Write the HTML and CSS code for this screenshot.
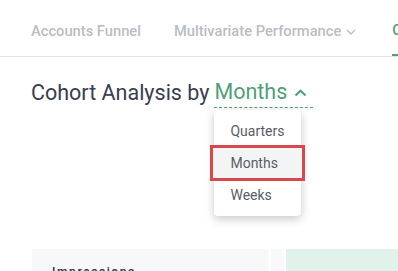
FILE: index.html
```html
<!DOCTYPE html>
<html>
<head>
<meta charset="utf-8">
<link rel="stylesheet" href="styles.css">
</head>
<body>
<nav class="tabs">
  <div class="tab">Accounts Funnel</div>
  <div class="tab">Multivariate Performance <svg class="chev" width="10" height="6" viewBox="0 0 10 6"><path d="M1 1l4 4 4-4" fill="none" stroke="#b9bdc5" stroke-width="1.4"/></svg></div>
  <div class="tab active">C</div>
</nav>
<section class="head">
  <h1 class="title">Cohort Analysis by <span class="picker">Months <svg class="up" width="13" height="8" viewBox="0 0 13 8"><path d="M1.5 6.5l5-4.8 5 4.8" fill="none" stroke="#4f9f79" stroke-width="2"/></svg>
    <ul class="menu">
      <li>Quarters</li>
      <li class="sel">Months</li>
      <li>Weeks</li>
    </ul>
  </span></h1>
</section>
<section class="cards">
  <div class="card gray"><span class="label">Impressions</span></div>
  <div class="sep"></div>
  <div class="card green"></div>
</section>
</body>
</html>
```
FILE: styles.css
```css
html, body { margin: 0; padding: 0; background: #fff; }
body { font-family: Roboto, "Noto Sans", sans-serif; width: 398px; height: 271px; overflow: hidden; }
.tabs { display: flex; height: 56px; border-bottom: 1px solid #e2e3e6; padding-left: 31px; gap: 33px; white-space: nowrap; overflow: hidden; }
.tab { font-size: 14.7px; font-weight: 500; color: #b9bdc5; display: flex; align-items: center; height: 56px; padding-top: 6px; box-sizing: border-box; }
.chev { margin-left: 5px; margin-top: 2px; }
.tab.active { color: #4f9f79; border-bottom: 2px solid #4f9f79; margin-left: 3px; width: 8px; overflow: hidden; }
.head { padding: 20px 0 0 31px; height: 100px; }
.title { margin: 0; font-size: 21.5px; font-weight: 400; color: #383d51; line-height: 32px; display: flex; white-space: nowrap; }
.picker { position: relative; color: #4f9f79; margin-left: 5px; border-bottom: 1px dashed #4f9f79; height: 30px; display: flex; align-items: center; }
.up { margin-left: 7px; margin-right: 6px; margin-top: 2px; }
.menu { position: absolute; left: 0; top: 33px; width: 87px; margin: 0; padding: 5px 0; list-style: none; background: #fff; border-radius: 4px; box-shadow: 0 3px 10px rgba(0,0,0,0.22); }
.menu li { font-size: 14px; color: #595d64; line-height: 32px; padding-left: 16px; height: 32px; }
.menu li.sel { background: #f3f5f5; outline: 3px solid #d9484a; outline-offset: -1px; margin: 0 -2px; padding-left: 18px; }
.cards { display: flex; padding-left: 32px; margin-top: 72px; height: 40px; }
.card.gray { width: 236px; background: #f7f8fa; padding: 12px 0 0 20px; box-sizing: border-box; }
.label { font-size: 12px; font-weight: 500; color: #2f3240; letter-spacing: 1.6px; }
.sep { width: 13px; margin-left: 3px; background: #f8f9fb; }
.card.green { flex: 1; background: #e0f2ea; margin-left: 2px; }
```
